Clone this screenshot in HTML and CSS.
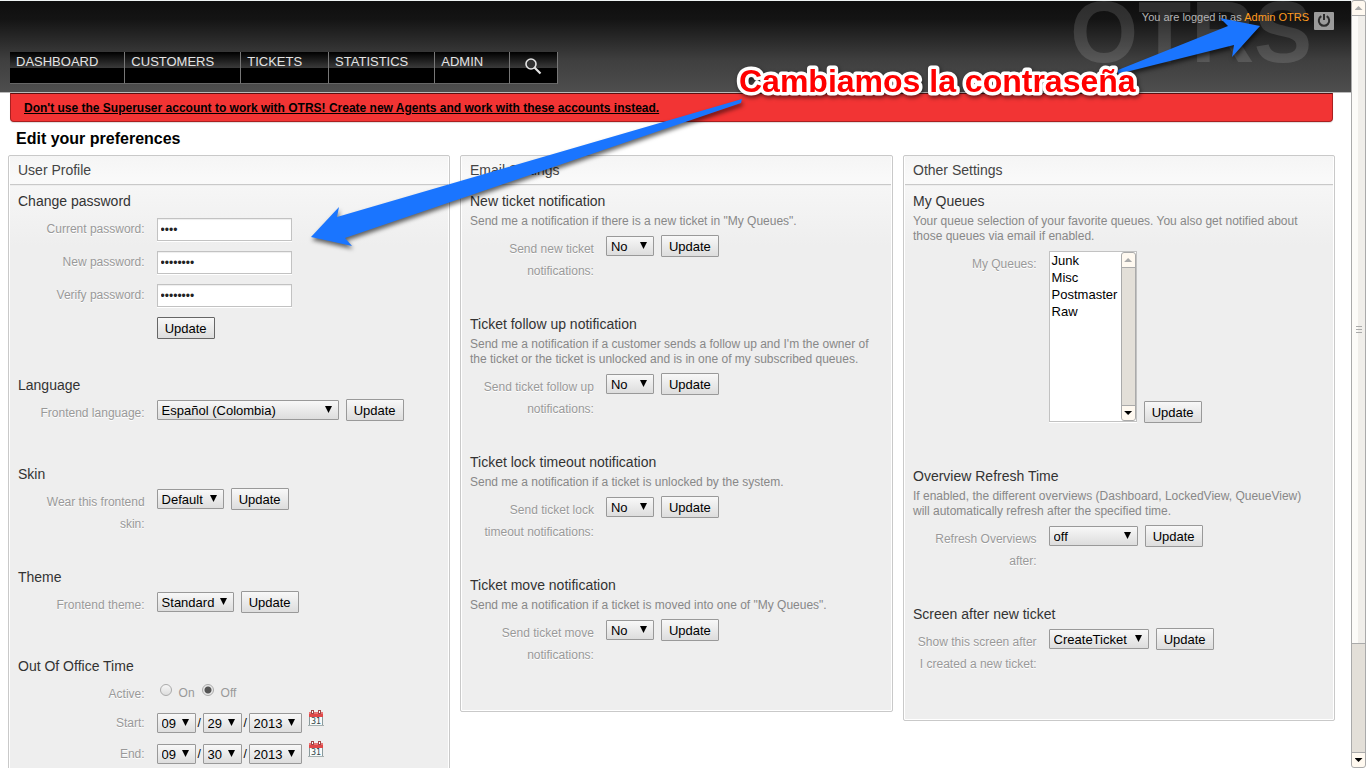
FILE: index.html
```html
<!DOCTYPE html>
<html lang="en">
<head>
<meta charset="utf-8">
<title>Edit your preferences - OTRS</title>
<link rel="stylesheet" href="styles.css">
</head>
<body>
<svg class="sprite" aria-hidden="true">
  <symbol id="calendar" viewBox="0 0 16 17">
    <rect x="1.500" y="3.500" width="13" height="12" fill="#f6fafa" stroke="#8a9a9c"/>
    <path d="M1 2h14v5H1z" fill="#e04848"/>
    <path d="M1 2h14v2H1z" fill="#ea7474"/>
    <path d="M3 0h3v4H3zM10 0h3v4h-3z" fill="#a04545"/>
    <path d="M4 1h1v2H4zM11 1h1v2h-1z" fill="#fff"/>
    <path d="M0 15.500h16" stroke="#a5b0b0"/>
    <text x="8" y="14" text-anchor="middle" class="cal-day">31</text>
  </symbol>
</svg>
<div class="window">
  <div class="page">
    <header class="header">
      <div class="watermark" aria-hidden="true">OTRS</div>
      <div class="account">
        <span>You are logged in as <a href="#profile">Admin OTRS</a></span>
        <button class="logout" type="button" aria-label="Logout">
          <svg width="20" height="18" viewBox="0 0 20 18"><g fill="none" stroke="#2c2c2c" stroke-width="2"><path d="M7.300 4.200A5.200 5.200 0 1 0 12.700 4.200"/><path d="M10 2v6"/></g></svg>
        </button>
      </div>
      <nav class="nav">
        <a href="#dashboard">DASHBOARD</a>
        <a href="#customers">CUSTOMERS</a>
        <a href="#tickets">TICKETS</a>
        <a href="#statistics">STATISTICS</a>
        <a href="#admin">ADMIN</a>
        <a href="#search" class="nav-search" aria-label="Search">
          <svg width="18" height="18" viewBox="0 0 18 18"><circle cx="7" cy="7" r="5" fill="#333" stroke="#e4e4e4" stroke-width="1.600"/><path d="M10.500 10.500l6 6" stroke="#e4e4e4" stroke-width="2.200"/></svg>
        </a>
      </nav>
    </header>

    <div class="notice"><a href="#agents">Don't use the Superuser account to work with OTRS! Create new Agents and work with these accounts instead.</a></div>
    <h1>Edit your preferences</h1>

    <main class="columns">
      <section class="widget">
        <h2>User Profile</h2>
        <div class="content">
          <form class="pref">
            <h3>Change password</h3>
            <div class="row"><label for="cur">Current password:</label><div class="controls entry"><input id="cur" type="password" value="root"></div></div>
            <div class="row"><label for="new">New password:</label><div class="controls entry"><input id="new" type="password" value="password"></div></div>
            <div class="row"><label for="ver">Verify password:</label><div class="controls entry"><input id="ver" type="password" value="password"></div></div>
            <div class="row submit"><div class="controls entry"><button class="btn strong" type="button">Update</button></div></div>
          </form>
          <form class="pref">
            <h3>Language</h3>
            <div class="row"><label for="lang">Frontend language:</label><div class="controls"><select id="lang" class="w-lang"><option>Español (Colombia)</option></select><button class="btn" type="button">Update</button></div></div>
          </form>
          <form class="pref">
            <h3>Skin</h3>
            <div class="row"><label for="skin">Wear this frontend skin:</label><div class="controls"><select id="skin" class="w-skin"><option>Default</option></select><button class="btn" type="button">Update</button></div></div>
          </form>
          <form class="pref">
            <h3>Theme</h3>
            <div class="row"><label for="theme">Frontend theme:</label><div class="controls"><select id="theme" class="w-theme"><option>Standard</option></select><button class="btn" type="button">Update</button></div></div>
          </form>
          <form class="pref">
            <h3>Out Of Office Time</h3>
            <div class="row radios"><span class="label">Active:</span><div class="controls">
              <input type="radio" name="ooo" id="on"><label for="on">On</label>
              <input type="radio" name="ooo" id="off" checked><label for="off">Off</label></div></div>
            <div class="row date"><label for="sm">Start:</label><div class="controls">
              <select id="sm" class="w-day"><option>09</option></select><span>/</span><select class="w-day" aria-label="Start day"><option>29</option></select><span>/</span><select class="w-year" aria-label="Start year"><option>2013</option></select>
              <a href="#start" class="cal" aria-label="Open start calendar"><svg width="16" height="17"><use href="#calendar"/></svg></a></div></div>
            <div class="row date"><label for="em">End:</label><div class="controls">
              <select id="em" class="w-day"><option>09</option></select><span>/</span><select class="w-day" aria-label="End day"><option>30</option></select><span>/</span><select class="w-year" aria-label="End year"><option>2013</option></select>
              <a href="#end" class="cal" aria-label="Open end calendar"><svg width="16" height="17"><use href="#calendar"/></svg></a></div></div>
          </form>
        </div>
      </section>

      <section class="widget">
        <h2>Email Settings</h2>
        <div class="content">
          <form class="pref">
            <h3>New ticket notification</h3>
            <p>Send me a notification if there is a new ticket in "My Queues".</p>
            <div class="row"><label for="n1">Send new ticket notifications:</label><div class="controls"><select id="n1" class="w-no"><option>No</option></select><button class="btn" type="button">Update</button></div></div>
          </form>
          <form class="pref">
            <h3>Ticket follow up notification</h3>
            <p>Send me a notification if a customer sends a follow up and I'm the owner of the ticket or the ticket is unlocked and is in one of my subscribed queues.</p>
            <div class="row"><label for="n2">Send ticket follow up notifications:</label><div class="controls"><select id="n2" class="w-no"><option>No</option></select><button class="btn" type="button">Update</button></div></div>
          </form>
          <form class="pref">
            <h3>Ticket lock timeout notification</h3>
            <p>Send me a notification if a ticket is unlocked by the system.</p>
            <div class="row"><label for="n3">Send ticket lock timeout notifications:</label><div class="controls"><select id="n3" class="w-no"><option>No</option></select><button class="btn" type="button">Update</button></div></div>
          </form>
          <form class="pref">
            <h3>Ticket move notification</h3>
            <p>Send me a notification if a ticket is moved into one of "My Queues".</p>
            <div class="row"><label for="n4">Send ticket move notifications:</label><div class="controls"><select id="n4" class="w-no"><option>No</option></select><button class="btn" type="button">Update</button></div></div>
          </form>
        </div>
      </section>

      <section class="widget">
        <h2>Other Settings</h2>
        <div class="content">
          <form class="pref">
            <h3>My Queues</h3>
            <p>Your queue selection of your favorite queues. You also get notified about those queues via email if enabled.</p>
            <div class="row queues"><label for="q">My Queues:</label><div class="controls">
              <div class="listbox">
                <select id="q" multiple><option>Junk</option><option>Misc</option><option>Postmaster</option><option>Raw</option></select>
                <div class="bar" aria-hidden="true"><span class="cap up off"></span><span class="trough"></span><span class="cap down"></span></div>
              </div>
              <button class="btn" type="button">Update</button></div></div>
          </form>
          <form class="pref">
            <h3>Overview Refresh Time</h3>
            <p>If enabled, the different overviews (Dashboard, LockedView, QueueView) will automatically refresh after the specified time.</p>
            <div class="row"><label for="r">Refresh Overviews after:</label><div class="controls"><select id="r" class="w-refresh"><option>off</option></select><button class="btn" type="button">Update</button></div></div>
          </form>
          <form class="pref">
            <h3>Screen after new ticket</h3>
            <div class="row"><label for="s">Show this screen after I&nbsp;created a new ticket:</label><div class="controls"><select id="s" class="w-screen"><option>CreateTicket</option></select><button class="btn" type="button">Update</button></div></div>
          </form>
        </div>
      </section>
    </main>
  </div>
  <div class="bar window-bar" aria-hidden="true"><span class="cap up off"></span><span class="thumb"><i></i><i></i><i></i></span><span class="trough"></span><span class="cap down"></span></div>
</div>

<svg class="annotation" width="1366" height="768" viewBox="0 0 1366 768">
  <g class="arrows">
    <path d="M1118 70L1228 26L1220 18L1260 26L1232 57L1234 45L1118 74Z"/>
    <path d="M742 99L337 217L339 207L311 237L352 246L345 238L741 103Z"/>
  </g>
  <text class="callout" x="739" y="92">Cambiamos la contraseña</text>
</svg>
</body>
</html>
```
FILE: styles.css
```css
* { box-sizing: border-box; }
body { margin: 0; background: #fff; color: #000; font: 12px/15px "Liberation Sans", Arial, sans-serif; }
h1, h2, h3, p { margin: 0; }
.sprite { display: none; }
.cal-day { font: 8px "DejaVu Sans", sans-serif; fill: #33454a; }

.window { display: flex; height: 100vh; overflow: hidden; }
.page { flex: 1; min-width: 0; overflow: hidden; }

/* Header */
.header {
  position: relative; overflow: hidden; height: 93px; padding: 11px 17px 0 10px;
  border-top: 1px solid #eef3f3; border-bottom: 1px solid #b9b9b9;
  background: linear-gradient(#0e0e0e, #141414 20%, #3f3f3f 65%, #4e4e4e);
}
.watermark {
  position: absolute; right: 39px; top: 0;
  font-weight: bold; font-size: 87px; line-height: 62px;
  color: rgba(255, 255, 255, .13);
}
.account {
  position: relative; display: flex; justify-content: flex-end; gap: 5px;
  height: 40px; color: #b5b5b5; font-size: 11px; line-height: 10px;
}
.account a { color: #ff9b1f; text-decoration: none; }
.logout { width: 20px; height: 18px; padding: 0; border: 0; border-radius: 1px; background: #9b9b9b; }
.logout svg { display: block; }
.nav { position: relative; display: flex; }
.nav a {
  height: 32px; padding: 2px 26px 0 6px;
  border-right: 1px solid #777; border-bottom: 1px solid #666;
  background: linear-gradient(#000, #3a3a3a 16px, #000 16px);
  color: #e4e4e4; font-size: 13px; line-height: 16px; text-decoration: none;
}
.nav .nav-search { width: 48px; padding: 5px 0 0 14px; }

.notice {
  height: 29px; margin: 0 18px 0 10px; padding: 7px 13px;
  border: 1px solid #a92020; border-top-color: #5c1010; border-radius: 0 0 4px 4px;
  background: #f23434; box-shadow: 0 1px 1px #ddd;
  font-weight: bold; white-space: nowrap;
}
.notice a { color: #000; }
h1 { padding-left: 16px; font-size: 16px; line-height: 33px; }

/* Columns */
.columns { display: grid; grid-template-columns: 442fr 433fr 432fr; gap: 10px; align-items: start; padding: 0 16px 0 8px; }
.widget { border: 1px solid #c9c9c9; border-radius: 2px; background: #eee; box-shadow: inset 0 0 0 1px #fff; }
.widget h2 {
  padding: 0 8px; border-bottom: 1px solid #c9c9c9; margin: 0 1px;
  background: linear-gradient(#f5f5f5, #fafafa);
  color: #444; font-weight: normal; font-size: 14px; line-height: 28px;
}
.content { margin: 1px; padding: 7px 8px 10px; background: linear-gradient(#f6f6f6, #eee 60px); }
.pref { margin-bottom: 34px; }
h3 { color: #333; font-weight: normal; font-size: 14px; line-height: 16px; }
.pref p { margin: 5px 0 6px; padding-right: 8px; color: #888; }
.row { display: flex; gap: 12px; min-height: 33px; }
h3 + .row { margin-top: 6px; }
.row > label, .row > .label {
  width: 30%; padding: 3px 0 0 2px; color: #999; line-height: 22px;
  text-align: right; text-shadow: 0 1px 0 #fff;
}
.controls { display: flex; align-items: flex-start; }
.entry { padding-top: 3px; }
.submit { min-height: 29px; padding-left: calc(30% + 12px); }

input[type="password"] {
  width: 135px; height: 23px; padding: 0 3px; border: 1px solid #c2c2c2; border-radius: 0;
  background: #fff; box-shadow: 0 1px 0 #fff, inset 0 1px 1px #eee;
  color: #222; font: 12px "Liberation Sans", Arial, sans-serif; outline: 0;
}
.btn {
  width: 58px; height: 22px; margin-left: 7px; padding: 1px 0 0;
  border: 1px solid #999; border-radius: 1px; background: linear-gradient(#f8f8f8, #ddd);
  color: #000; font: 13px/18px "Liberation Sans", Arial, sans-serif;
}
.btn.strong { margin-left: 0; border-color: #666; }
.controls > select {
  appearance: none; height: 20px; margin: 1px 0 0; padding: 1px 4px 0;
  border: 1px solid #999; border-radius: 1px;
  background:
    url("data:image/svg+xml,%3Csvg xmlns='http://www.w3.org/2000/svg' width='7' height='7'%3E%3Cpath d='M0 0h7L3.5 7z'/%3E%3C/svg%3E") no-repeat right 6px top 5px,
    linear-gradient(#f8f8f8, #ddd);
  color: #000; font: 13px/17px "Liberation Sans", Arial, sans-serif;
}
.w-lang { width: 182px; }
.w-skin { width: 67px; }
.w-theme { width: 77px; }
.w-day { width: 39px; }
.w-year { width: 53px; }
.w-no { width: 48px; }
.w-refresh { width: 89px; }
.w-screen { width: 100px; }

.radios { min-height: 29px; }
.radios .controls { gap: 7px; padding: 4px 0 0 3px; color: #999; line-height: 18px; }
.radios input {
  appearance: none; width: 12px; height: 12px; margin: 0; border: 1px solid #aaa; border-radius: 50%;
  background: linear-gradient(#f6f6f6, #ddd);
}
.radios input:checked { background: radial-gradient(#555 0 3px, #e8e8e8 4px); }
.date { min-height: 31px; }
.date .controls { padding-top: 3px; }
.date .controls > span { width: 7px; line-height: 22px; text-align: center; }
.cal { margin: -2px 0 0 6px; }
.cal svg { display: block; }

.queues { min-height: 184px; }
.queues .controls { align-items: flex-end; height: 173px; }
.listbox { display: flex; width: 88px; height: 171px; margin-bottom: 1px; border: 1px solid #c2c2c2; background: #fff; box-shadow: 0 1px 0 #fff; }
.listbox select {
  flex: 1; min-width: 0; margin: 0; padding: 0; border: 0; background: #fff; overflow: hidden;
  color: #000; font: 13px "Liberation Sans", Arial, sans-serif; outline: 0;
}
.listbox option { min-height: 17px; padding: 1px 2px; line-height: 15px; }

/* Scroll bars */
.bar { display: flex; flex-direction: column; width: 15px; border: 1px solid #aaa; border-radius: 3px; background: #fff9f0; }
.cap { display: grid; place-items: center; height: 14px; }
.cap::before { content: ""; width: 8px; height: 4px; background: #000; clip-path: polygon(0 0, 100% 0, 50% 100%); }
.cap.up::before { clip-path: polygon(50% 0, 100% 100%, 0 100%); }
.cap.off::before { background: #aaa; }
.trough { flex: 1; border: solid #aaa; border-width: 1px 0; background: #e3dfd8; }
.window-bar .trough { flex: 108; }
.thumb {
  flex: 629; display: flex; flex-direction: column; justify-content: center; align-items: center; gap: 2px;
  border-top: 1px solid #aaa; background: linear-gradient(90deg, #fcfbf8 50%, #f0eeea 50%);
}
.thumb i { width: 6px; height: 1px; background: #aaa; }

/* Drawn over the page */
.annotation { position: absolute; left: 0; top: 0; pointer-events: none; }
.arrows { fill: #1a75ff; filter: drop-shadow(1px 3px 2px rgba(0, 0, 0, .6)); }
.callout {
  font: bold 32px "Liberation Sans", Arial, sans-serif; fill: #f00;
  stroke: #fff; stroke-width: 7px; stroke-linejoin: round; paint-order: stroke;
  filter: drop-shadow(1px 2px 2px rgba(0, 0, 0, .6));
}
```
